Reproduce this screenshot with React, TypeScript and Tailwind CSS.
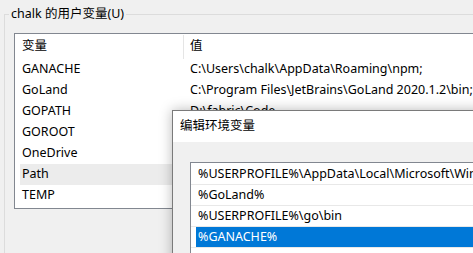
import React from 'react'

const userVars = [
  { name: 'GANACHE', value: 'C:\\Users\\chalk\\AppData\\Roaming\\npm;' },
  { name: 'GoLand', value: 'C:\\Program Files\\JetBrains\\GoLand 2020.1.2\\bin;' },
  { name: 'GOPATH', value: 'D:\\fabric\\Code' },
  { name: 'GOROOT', value: 'C:\\Go\\' },
  { name: 'OneDrive', value: 'C:\\Users\\chalk\\OneDrive' },
  { name: 'Path', value: '%USERPROFILE%\\AppData\\Local' },
  { name: 'TEMP', value: '%USERPROFILE%\\AppData\\Local\\Temp' },
]

const pathEntries = [
  '%USERPROFILE%\\AppData\\Local\\Microsoft\\WindowsApps',
  '%GoLand%',
  '%USERPROFILE%\\go\\bin',
  '%GANACHE%',
]

const font = "font-['Noto_Sans','Noto_Sans_CJK_SC',sans-serif]"

export default function App() {
  return (
    <div className={`relative w-[473px] h-[253px] overflow-hidden bg-[#f0f0f0] text-[12.5px] text-black ${font}`}>
      {/* group box */}
      <div className="ml-[4px] mt-[14px] relative border-l border-t border-[#dcdcdc] h-[260px]">
        <span className="absolute -top-[10px] left-[4px] bg-[#f0f0f0] px-[2px] leading-[18px] whitespace-nowrap">
          chalk 的用户变量(U)
        </span>

        <div className="ml-[9px] mt-[18px] w-[480px] h-[176px] border border-[#828790] bg-white overflow-hidden">
          <div className="flex h-[25px] items-center pl-[5px]">
            <div className="w-[163px] shrink-0 pl-[2px]">变量</div>
            <div className="w-px h-[24px] shrink-0 bg-[#e5e5e5]" />
            <div className="pl-[6px]">值</div>
          </div>
          {userVars.map((v) => (
            <div
              key={v.name}
              className={`ml-[5px] flex h-[21px] items-center whitespace-nowrap ${v.name === 'Path' ? 'bg-[#ececec]' : ''}`}
            >
              <div className="w-[170px] shrink-0 pl-[2px]">{v.name}</div>
              <div className="shrink-0">{v.value}</div>
            </div>
          ))}
        </div>
      </div>

      {/* edit dialog */}
      <div className="absolute left-[172px] top-[110px] w-[320px] h-[160px] border border-[#7a7a7a] bg-[#f0f0f0] shadow-[0_0_12px_rgba(0,0,0,0.28)]">
        <div className="h-[31px] bg-white flex items-center pl-[7px]">编辑环境变量</div>
        <div className="ml-[17px] mt-[20px] h-[120px] border border-[#828790] bg-white pt-[1px] overflow-hidden">
          {pathEntries.map((p, i) => {
            const selected = i === pathEntries.length - 1
            return (
              <div key={p} className="h-[21px] border-b border-[#e8e8e8] pl-[5px]">
                <div
                  className={`h-full flex items-center pl-[2px] whitespace-nowrap ${selected ? 'bg-[#0078d7] text-white' : ''}`}
                >
                  {p}
                </div>
              </div>
            )
          })}
        </div>
      </div>
    </div>
  )
}
